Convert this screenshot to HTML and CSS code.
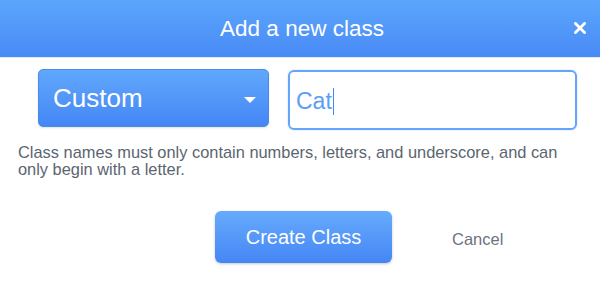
FILE: index.html
```html
<!DOCTYPE html>
<html>
<head>
<title>Add a new class</title>
<link rel="stylesheet" href="styles.css">
</head>
<body>
<div class="dialog">
  <div class="dialog-header">
    <span class="dialog-title">Add a new class</span>
    <button class="close-button" aria-label="Close">
      <svg width="12" height="12" viewBox="0 0 12 12">
        <path d="M1.5 1.5 L10.5 10.5 M10.5 1.5 L1.5 10.5" stroke="#fff" stroke-width="2.8" stroke-linecap="square"/>
      </svg>
    </button>
  </div>
  <div class="class-row">
    <div class="type-select">
      <span>Custom</span>
      <svg class="caret" width="12" height="6" viewBox="0 0 12 6">
        <path d="M0 0 L12 0 L6 6 Z" fill="#fff"/>
      </svg>
    </div>
    <div class="name-input">
      <span class="name-value">Cat</span><span class="text-cursor"></span>
    </div>
  </div>
  <p class="hint">Class names must only contain numbers, letters, and underscore, and can only begin with a letter.</p>
  <div class="dialog-footer">
    <button class="create-button">Create Class</button>
    <button class="cancel-button">Cancel</button>
  </div>
</div>
</body>
</html>
```

FILE: styles.css
```css
body {
  margin: 0;
  font-family: "Liberation Sans", Arial, sans-serif;
  background-color: #fff;
}
.dialog {
  width: 600px;
  height: 294px;
  background-color: #fff;
}
.dialog-header {
  position: relative;
  height: 57px;
  display: flex;
  align-items: center;
  justify-content: center;
  background: linear-gradient(#5ba6fc, #498af6);
  border-bottom: 1px solid #d9e7fb;
}
.dialog-title {
  color: #fff;
  font-size: 22.5px;
  margin-left: 4px;
}
.close-button {
  position: absolute;
  right: 14px;
  top: 22px;
  padding: 0;
  border: none;
  background: none;
  width: 12px;
  height: 12px;
  display: flex;
}
.class-row {
  display: flex;
  gap: 19px;
  padding: 11px 0 0 38px;
  align-items: flex-start;
}
.type-select {
  box-sizing: border-box;
  width: 231px;
  height: 58px;
  display: flex;
  align-items: center;
  justify-content: space-between;
  padding: 0 12px 0 14px;
  border-radius: 5px;
  border: 1px solid #4a8ae8;
  background: linear-gradient(#60a8fc, #4586f5);
  color: #fff;
  font-size: 26px;
  box-shadow: 0 1px 2px rgba(0, 0, 0, 0.12);
}
.caret {
  margin-top: 4px;
}
.name-input {
  box-sizing: border-box;
  width: 289px;
  height: 60px;
  margin-top: 1px;
  display: flex;
  align-items: center;
  padding: 2px 0 0 6px;
  border: 2px solid #64a4fa;
  border-radius: 6px;
  box-shadow: 0 0 2px rgba(100, 164, 250, 0.45);
}
.name-value {
  color: #5b9ef5;
  font-size: 23px;
}
.text-cursor {
  width: 1.5px;
  height: 27px;
  margin-left: 1px;
  background-color: #3f87f3;
}
.hint {
  margin: 14px 0 0 18px;
  width: 558px;
  font-size: 16.4px;
  line-height: 17px;
  color: #5b6570;
}
.dialog-footer {
  display: flex;
  align-items: center;
  padding: 33px 0 0 215px;
}
.create-button {
  width: 177px;
  height: 52px;
  border: none;
  border-radius: 6px;
  background: linear-gradient(#66abfd, #4586f5);
  color: #fff;
  font-family: inherit;
  font-size: 20px;
  box-shadow: 0 1px 3px rgba(0, 0, 0, 0.22);
}
.cancel-button {
  margin: 4px 0 0 60px;
  padding: 0;
  border: none;
  background: none;
  color: #6b7480;
  font-family: inherit;
  font-size: 16.5px;
}
```
